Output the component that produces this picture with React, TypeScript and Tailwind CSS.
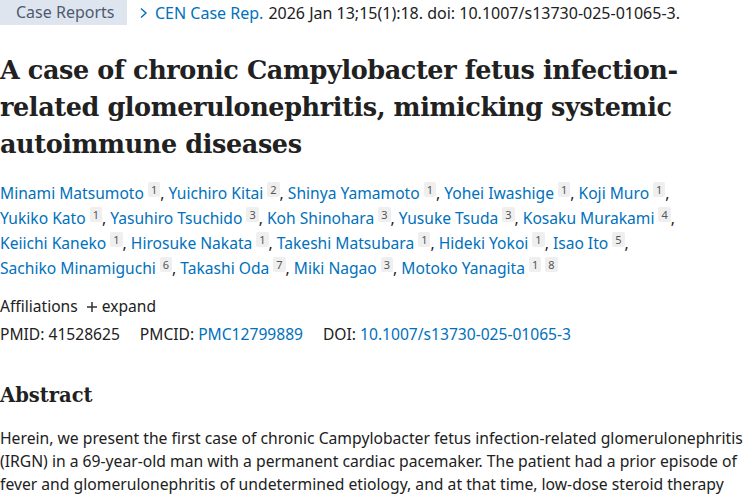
const authorLines: { name: string; refs: string[] }[][] = [
  [
    { name: "Minami Matsumoto", refs: ["1"] },
    { name: "Yuichiro Kitai", refs: ["2"] },
    { name: "Shinya Yamamoto", refs: ["1"] },
    { name: "Yohei Iwashige", refs: ["1"] },
    { name: "Koji Muro", refs: ["1"] },
  ],
  [
    { name: "Yukiko Kato", refs: ["1"] },
    { name: "Yasuhiro Tsuchido", refs: ["3"] },
    { name: "Koh Shinohara", refs: ["3"] },
    { name: "Yusuke Tsuda", refs: ["3"] },
    { name: "Kosaku Murakami", refs: ["4"] },
  ],
  [
    { name: "Keiichi Kaneko", refs: ["1"] },
    { name: "Hirosuke Nakata", refs: ["1"] },
    { name: "Takeshi Matsubara", refs: ["1"] },
    { name: "Hideki Yokoi", refs: ["1"] },
    { name: "Isao Ito", refs: ["5"] },
  ],
  [
    { name: "Sachiko Minamiguchi", refs: ["6"] },
    { name: "Takashi Oda", refs: ["7"] },
    { name: "Miki Nagao", refs: ["3"] },
    { name: "Motoko Yanagita", refs: ["1", "8"] },
  ],
];

const abstractLines = [
  "Herein, we present the first case of chronic Campylobacter fetus infection-related glomerulonephritis",
  "(IRGN) in a 69-year-old man with a permanent cardiac pacemaker. The patient had a prior episode of",
  "fever and glomerulonephritis of undetermined etiology, and at that time, low-dose steroid therapy",
];

const sans = "font-['Noto_Sans','Open_Sans',sans-serif]";
const serif = "font-['DejaVu_Serif','Liberation_Serif',serif]";

function Ref({ n }: { n: string }) {
  return (
    <span className="ml-[4px] inline-block align-top mt-[1px] rounded-[2px] bg-[#efefef] px-[3px] text-[11px] leading-[15px] text-[#555]">
      {n}
    </span>
  );
}

export default function App() {
  return (
    <main className={`min-h-screen w-[750px] overflow-hidden bg-white text-[#212121] ${sans}`}>
      <div className="flex items-center h-[25px] text-[16px] whitespace-nowrap">
        <span className="h-[25px] w-[127px] bg-[#dfe5ef] pl-[16px] leading-[25px] text-[#4d5b6f]">
          Case Reports
        </span>
        <span className="ml-[12px] flex items-center text-[#0071bc]">
          <svg width="10" height="12" viewBox="0 0 10 12" className="mr-[6px]">
            <path d="M2 1.5 L7 6 L2 10.5" stroke="#0071bc" strokeWidth="1.4" fill="none" />
          </svg>
          CEN Case Rep.
        </span>
        <span className="ml-[5px] text-[#212121]">
          2026 Jan 13;15(1):18. doi: 10.1007/s13730-025-01065-3.
        </span>
      </div>

      <h1 className={`mt-[27px] text-[25.5px] font-bold leading-[37px] tracking-[-0.4px] text-[#212121] ${serif}`}>
        <span className="block whitespace-nowrap">A case of chronic Campylobacter fetus infection-</span>
        <span className="block whitespace-nowrap">related glomerulonephritis, mimicking systemic</span>
        <span className="block whitespace-nowrap">autoimmune diseases</span>
      </h1>

      <div className="mt-[18px] text-[15.6px] leading-[25px]">
        {authorLines.map((line, i) => (
          <div key={i} className="whitespace-nowrap">
            {line.map((a, j) => (
              <span key={a.name}>
                <span className="text-[#0071bc]">{a.name}</span>
                {a.refs.map((r) => (
                  <Ref key={r} n={r} />
                ))}
                {(j < line.length - 1 || i < authorLines.length - 1) && (
                  <span className="text-[#212121]">,&nbsp;</span>
                )}
              </span>
            ))}
          </div>
        ))}
      </div>

      <div className="mt-[13px] flex items-center gap-[8px] text-[15.6px] leading-[25px]">
        <span>Affiliations</span>
        <span className="flex items-center gap-[4px]">
          <svg width="12" height="12" viewBox="0 0 12 12">
            <path d="M6 1 V11 M1 6 H11" stroke="#333" strokeWidth="1.5" />
          </svg>
          expand
        </span>
      </div>

      <div className="mt-[3px] flex gap-[20px] text-[15.6px] leading-[25px] whitespace-nowrap">
        <span>PMID: 41528625</span>
        <span>
          PMCID: <span className="text-[#0071bc]">PMC12799889</span>
        </span>
        <span>
          DOI: <span className="text-[#0071bc]">10.1007/s13730-025-01065-3</span>
        </span>
      </div>

      <h2 className={`mt-[34px] text-[19.5px] font-bold leading-[30px] ${serif}`}>Abstract</h2>

      <div className="mt-[16px] text-[15.7px] leading-[23px]">
        {abstractLines.map((l) => (
          <p key={l} className="whitespace-nowrap">
            {l}
          </p>
        ))}
      </div>
    </main>
  );
}
